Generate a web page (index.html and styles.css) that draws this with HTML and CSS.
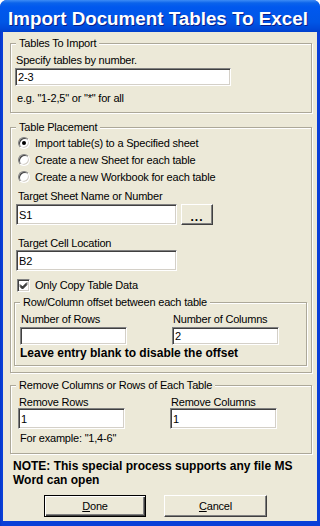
FILE: index.html
```html
<!DOCTYPE html>
<html lang="en">

<head>
    <meta charset="UTF-8">
    <meta name="viewport" content="width=device-width, initial-scale=1.0">
    <title>Import Document Tables To Excel</title>
    <link rel="stylesheet" href="styles.css">
</head>

<body>
    <div class="window">
        <div class="titlebar">
            <span class="title">Import Document Tables To Excel</span>
        </div>

        <div class="client">
            <fieldset class="group group-import">
                <legend>Tables To Import</legend>
                <div class="label">Specify tables by number.</div>
                <input type="text" class="field field-tables" value="2-3">
                <div class="hint">e.g. "1-2,5" or "*" for all</div>
            </fieldset>

            <fieldset class="group group-placement">
                <legend>Table Placement</legend>
                <label class="option">
                    <span class="radio checked"></span>
                    <span>Import table(s) to a Specified sheet</span>
                </label>
                <label class="option">
                    <span class="radio"></span>
                    <span>Create a new Sheet for each table</span>
                </label>
                <label class="option">
                    <span class="radio"></span>
                    <span>Create a new Workbook for each table</span>
                </label>

                <div class="label label-sheet">Target Sheet Name or Number</div>
                <div class="sheet-row">
                    <input type="text" class="field field-target" value="S1">
                    <button class="btn btn-browse">...</button>
                </div>

                <div class="label label-cell">Target Cell Location</div>
                <input type="text" class="field field-target" value="B2">

                <label class="option option-check">
                    <span class="checkbox">
                        <svg width="9" height="9" viewBox="0 0 9 9">
                            <path d="M1 3.5 L3.5 6 L8 1.5 M1 4.5 L3.5 7 L8 2.5 M1 5.5 L3.5 8 L8 3.5" stroke="#000"
                                stroke-width="1" fill="none" />
                        </svg>
                    </span>
                    <span>Only Copy Table Data</span>
                </label>

                <fieldset class="group group-offset">
                    <legend>Row/Column offset between each table</legend>
                    <div class="pair">
                        <div>
                            <div class="label">Number of Rows</div>
                            <input type="text" class="field field-small field-short" value="">
                        </div>
                        <div>
                            <div class="label">Number of Columns</div>
                            <input type="text" class="field field-small field-short" value="2">
                        </div>
                    </div>
                    <div class="bold-note">Leave entry blank to disable the offset</div>
                </fieldset>
            </fieldset>

            <fieldset class="group group-remove">
                <legend>Remove Columns or Rows of Each Table</legend>
                <div class="pair">
                    <div>
                        <div class="label">Remove Rows</div>
                        <input type="text" class="field field-small" value="1">
                    </div>
                    <div>
                        <div class="label">Remove Columns</div>
                        <input type="text" class="field field-small" value="1">
                    </div>
                </div>
                <div class="hint">For example: "1,4-6"</div>
            </fieldset>

            <div class="note">NOTE: This special process supports any file MS Word can open</div>

            <div class="actions">
                <button class="btn btn-default"><u>D</u>one</button>
                <button class="btn"><u>C</u>ancel</button>
            </div>
        </div>
    </div>
</body>

</html>
```

FILE: styles.css
```css
:root {
    --face: #ece9d8;
    --frame: #0a3fd8;
    --etch: #aca899;
    --shadow: #808080;
    --dark: #404040;
}

body {
    margin: 0;
    background: #fff;
    font-family: 'Liberation Sans', Arial, sans-serif;
    font-size: 11px;
    color: #000;
}

.window {
    width: 320px;
    height: 526px;
    display: flex;
    flex-direction: column;
    background: linear-gradient(90deg, #0737c8, var(--frame) 2px);
    border-radius: 7px 7px 0 0;
    overflow: hidden;
}

.titlebar {
    height: 32px;
    box-sizing: border-box;
    padding: 5px 0 0 8px;
    background: linear-gradient(#3d8cf5 0, #0a63eb 3px, #0058ee 7px, #0056e6 22px, #0048d8 29px, #003fcc 32px);
}

.title {
    display: block;
    color: #fff;
    font-weight: bold;
    font-size: 18.8px;
    line-height: 27px;
    text-shadow: 1px 1px 0 #0a1f8a;
    white-space: nowrap;
}

.client {
    flex: 1;
    margin: 0 3px 5px;
    padding: 5px 0 0 7px;
    background: var(--face);
    letter-spacing: -0.2px;
}

/* group boxes */
.group {
    width: 302px;
    min-inline-size: 0;
    box-sizing: border-box;
    margin: 0;
    border: 1px solid var(--etch);
    box-shadow: 1px 1px 0 #fff, inset 1px 1px 0 #fff;
}

.group legend {
    line-height: 13px;
    padding: 0 3px;
    background: var(--face);
}

.group-import {
    padding: 4px 0 7px 4px;
}

.group-import legend {
    margin-left: 1px;
}

.group-placement {
    margin-top: 8px;
    padding: 0 0 6px 5px;
}

.group-placement legend {
    margin-left: 0;
}

.group-offset {
    width: 293px;
    margin: 3px 0 0 -2px;
    padding: 4px 0 5px 5px;
}

.group-offset legend {
    margin-left: 0;
}

.group-remove {
    margin-top: 6px;
    padding: 4px 0 8px 7px;
}

.group-remove legend {
    margin-left: -2px;
}

.label {
    line-height: 13px;
    padding-left: 1px;
    white-space: nowrap;
}

.group-placement > .label {
    padding-left: 2px;
}

.label-sheet {
    margin-top: 5px;
}

.label-cell {
    margin-top: 12px;
}

.hint {
    line-height: 13px;
    padding-left: 2px;
}

.group-import .hint {
    margin-top: 6px;
}

.group-remove .hint {
    margin-top: 3px;
}

/* sunken edit boxes */
.field {
    display: block;
    box-sizing: border-box;
    margin: 0;
    padding: 0 0 0 2px;
    font: inherit;
    letter-spacing: inherit;
    color: #000;
    background: #fff;
    border: 1px solid;
    border-color: var(--shadow) #fff #fff var(--shadow);
    box-shadow: inset 1px 1px 0 var(--dark), inset -1px -1px 0 #d4d0c8;
    outline: none;
}

.group-import .label + .field {
    margin-top: 1px;
}

.field-tables {
    width: 216px;
    height: 18px;
}

.field-target {
    width: 161px;
    height: 21px;
}

.sheet-row {
    display: flex;
    gap: 4px;
    margin-top: 1px;
}

.field-small {
    width: 107px;
    height: 21px;
}

.field-short {
    height: 18px;
    margin-top: 1px;
}

.group-remove .field-small {
    margin-top: -1px;
}

.pair {
    display: grid;
    grid-template-columns: 152px 1fr;
}

/* radio buttons and check box */
.option {
    display: flex;
    align-items: center;
    gap: 5px;
    height: 17px;
    padding-left: 2px;
    white-space: nowrap;
}

.radio {
    position: relative;
    width: 12px;
    height: 12px;
    box-sizing: border-box;
    border-radius: 50%;
    background: #fff;
    border: 1px solid;
    border-color: var(--shadow) #fff #fff var(--shadow);
    box-shadow: inset 1px 1px 0 var(--dark), inset -1px -1px 0 #d4d0c8;
}

.radio.checked::after {
    content: '';
    position: absolute;
    left: 3px;
    top: 3px;
    width: 4px;
    height: 4px;
    border-radius: 50%;
    background: #000;
}

.option-check {
    height: 16px;
    margin-top: 6px;
    padding-left: 1px;
}

.checkbox {
    display: flex;
    align-items: center;
    justify-content: center;
    width: 13px;
    height: 13px;
    box-sizing: border-box;
    background: #fff;
    border: 1px solid;
    border-color: var(--shadow) #fff #fff var(--shadow);
    box-shadow: inset 1px 1px 0 var(--dark), inset -1px -1px 0 #d4d0c8;
}

.bold-note {
    margin-top: 1px;
    font-size: 12px;
    font-weight: bold;
    line-height: 14px;
    letter-spacing: 0;
    white-space: nowrap;
}

.note {
    margin-top: 5px;
    padding: 0 8px 0 3px;
    font-size: 12px;
    font-weight: bold;
    line-height: 14px;
    letter-spacing: 0;
}

/* push buttons */
.btn {
    box-sizing: border-box;
    margin: 0;
    padding: 0;
    font: inherit;
    letter-spacing: inherit;
    color: #000;
    background: var(--face);
    border: 1px solid;
    border-color: #fff var(--dark) var(--dark) #fff;
    box-shadow: inset -1px -1px 0 var(--shadow);
}

.btn-browse {
    width: 32px;
    height: 21px;
    font-weight: bold;
    font-size: 12px;
    line-height: 12px;
    padding-top: 4px;
    letter-spacing: 1px;
}

.actions {
    display: flex;
    gap: 18px;
    margin-top: 8px;
    padding-left: 34px;
}

.actions .btn {
    width: 103px;
    height: 22px;
}

.actions .btn-default {
    width: 102px;
    border-color: #000;
    box-shadow: inset 1px 1px 0 #fff, inset -1px -1px 0 var(--dark), inset -2px -2px 0 var(--shadow);
}
```
